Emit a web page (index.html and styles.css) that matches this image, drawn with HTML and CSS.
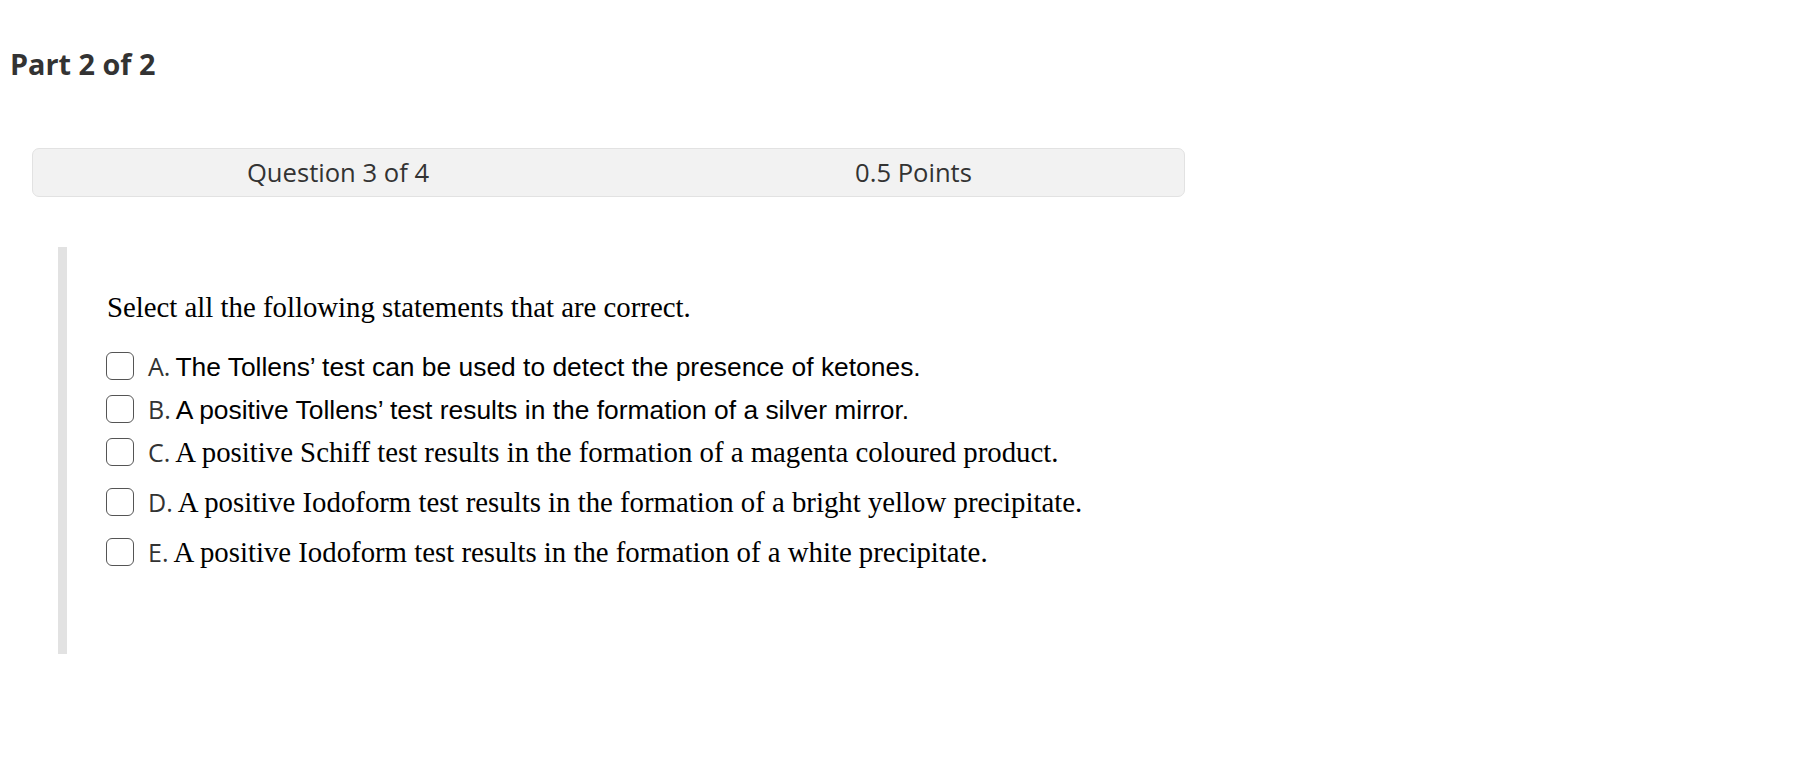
FILE: index.html
```html
<!DOCTYPE html>
<html lang="en">
<head>
<meta charset="utf-8">
<title>Part 2 of 2</title>
<link rel="stylesheet" href="styles.css">
</head>
<body>
<div class="page">
  <h1 class="part-title">Part 2 of 2</h1>
  <div class="question-bar">
    <div class="bar-cell">Question 3 of 4</div>
    <div class="bar-cell">0.5 Points</div>
  </div>
  <section class="question">
    <p class="prompt">Select all the following statements that are correct.</p>
    <ul class="options">
      <li class="option option-sans"><span class="box"></span><span class="content"><span class="label">A.</span><span class="text sans">The Tollens’ test can be used to detect the presence of ketones.</span></span></li>
      <li class="option option-sans"><span class="box"></span><span class="content"><span class="label">B.</span><span class="text sans">A positive Tollens’ test results in the formation of a silver mirror.</span></span></li>
      <li class="option option-serif"><span class="box"></span><span class="content"><span class="label">C.</span><span class="text serif">A positive Schiff test results in the formation of a magenta coloured product.</span></span></li>
      <li class="option option-serif"><span class="box"></span><span class="content"><span class="label">D.</span><span class="text serif">A positive Iodoform test results in the formation of a bright yellow precipitate.</span></span></li>
      <li class="option option-serif"><span class="box"></span><span class="content"><span class="label">E.</span><span class="text serif">A positive Iodoform test results in the formation of a white precipitate.</span></span></li>
    </ul>
  </section>
</div>
</body>
</html>
```
FILE: styles.css
```css
html, body {
  margin: 0;
  padding: 0;
  background: #ffffff;
}
body {
  font-family: "Open Sans", "Liberation Sans", sans-serif;
  color: #333333;
}
.page {
  padding-left: 10px;
}
.part-title {
  margin: 44px 0 0 0;
  font-size: 28.8px;
  font-weight: 700;
  line-height: 40px;
  color: #333333;
}
.question-bar {
  margin: 64px 0 0 22px;
  width: 1153px;
  height: 49px;
  box-sizing: border-box;
  border: 1px solid #e2e2e2;
  border-radius: 7px;
  background: #f2f2f2;
  display: grid;
  grid-template-columns: 610px 1fr;
  align-items: center;
  font-size: 25.6px;
  line-height: 35px;
  color: #333333;
}
.bar-cell {
  text-align: center;
}
.question {
  margin: 50px 0 0 48px;
  height: 407px;
  box-sizing: border-box;
  border-left: 9.6px solid #e2e2e2;
  padding: 44px 0 0 40px;
}
.prompt {
  margin: 0;
  font-family: "Liberation Serif", "Times New Roman", serif;
  font-size: 28.8px;
  color: #000000;
}
.options {
  list-style: none;
  margin: 20px 0 0 -1px;
  padding: 0;
}
.option {
  display: flex;
  align-items: center;
  white-space: nowrap;
}
.option-sans {
  height: 43px;
}
.option-serif {
  height: 50px;
}
.option-sans + .option-serif {
  margin-top: -3px;
}
.box {
  flex: none;
  width: 28px;
  height: 28px;
  box-sizing: border-box;
  border: 1.5px solid #555555;
  border-radius: 6px;
  background: #ffffff;
  margin-right: 14px;
}
.content {
  display: block;
}
.label {
  font-family: "Open Sans", "Liberation Sans", sans-serif;
  font-size: 25px;
  color: #333333;
  margin-right: 5px;
}
.text {
  color: #000000;
}
.sans {
  font-family: "Liberation Sans", Arial, sans-serif;
  font-size: 26.4px;
}
.serif {
  font-family: "Liberation Serif", "Times New Roman", serif;
  font-size: 28.8px;
}
```
